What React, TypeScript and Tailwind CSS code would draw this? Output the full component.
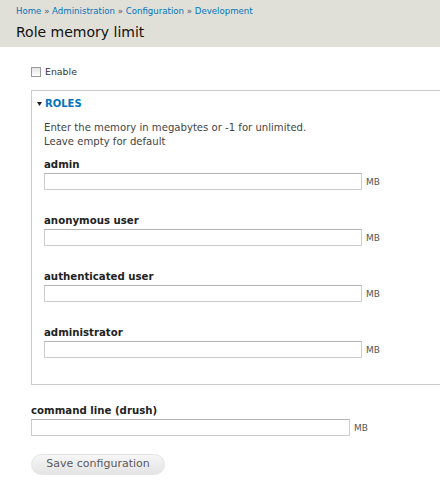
import React from 'react';

const roles = ['admin', 'anonymous user', 'authenticated user', 'administrator'];

function MemoryField({ label, inputWidth }: { label: string; inputWidth: string }) {
  return (
    <div>
      <label className="block text-[10.2px] font-bold text-[#222] leading-[14px] mb-[1px]">{label}</label>
      <div className="flex items-center">
        <input
          type="text"
          className={`${inputWidth} h-[17px] border border-[#ccc] border-t-[#b4b4b4] bg-white`}
        />
        <span className="ml-[4px] mt-[2px] text-[9px] text-[#555]">MB</span>
      </div>
    </div>
  );
}

export default function App() {
  return (
    <div className="min-h-[487px] bg-white font-['DejaVu_Sans',Verdana,sans-serif] text-[#333] overflow-hidden">
      {/* Header */}
      <div className="bg-[#e0e0d8] h-[47px] pl-[16px] pt-[5px]">
        <div className="text-[8.6px] leading-[13px] text-[#0074bd]">
          Home <span className="text-[#555]">»</span> Administration <span className="text-[#555]">»</span> Configuration{' '}
          <span className="text-[#555]">»</span> Development
        </div>
        <h1 className="text-[14px] leading-[20px] mt-[4px] text-[#111] font-normal">Role memory limit</h1>
      </div>

      <div className="pl-[31px] pt-[19px]">
        <label className="flex items-center gap-[4px] text-[9.4px] text-[#333] h-[12px]">
          <span className="w-[10px] h-[10px] border border-[#999] bg-gradient-to-b from-[#e4e4e4] to-white" />
          Enable
        </label>

        {/* Roles fieldset */}
        <div className="mt-[12px] border border-r-0 border-[#ccc] h-[295px] pl-[12px] pt-[6px]">
          <div className="flex items-center text-[10px] font-bold text-[#0074bd] leading-[14px]">
            <svg width="5" height="4" viewBox="0 0 5 4" className="-ml-[7px] mr-[3px]">
              <path d="M0 0 L5 0 L2.5 4 Z" fill="#222" />
            </svg>
            ROLES
          </div>
          <div className="mt-[10px] text-[10.1px] leading-[14px] text-[#444]">
            <div>Enter the memory in megabytes or -1 for unlimited.</div>
            <div>Leave empty for default</div>
          </div>
          <div className="mt-[9px] flex flex-col gap-[24px]">
            {roles.map((r) => (
              <MemoryField key={r} label={r} inputWidth="w-[318px]" />
            ))}
          </div>
        </div>

        <div className="mt-[19px]">
          <MemoryField label="command line (drush)" inputWidth="w-[319px]" />
        </div>

        <button className="mt-[18px] w-[134px] h-[21px] rounded-[11px] border border-[#e4e4e4] bg-gradient-to-b from-[#f6f6f6] to-[#e4e4e4] text-[11px] text-[#5a5a5a]">
          Save configuration
        </button>
      </div>
    </div>
  );
}
